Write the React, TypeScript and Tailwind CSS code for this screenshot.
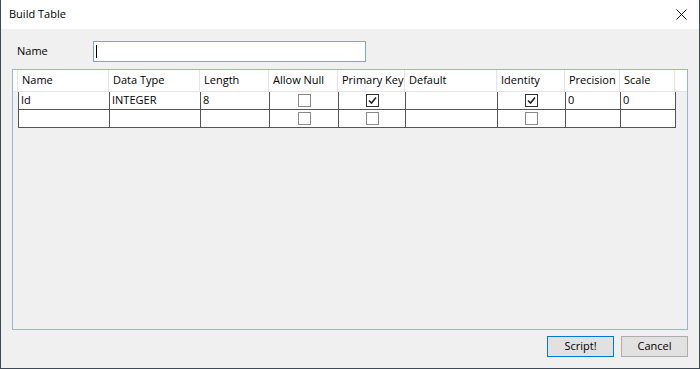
import React from "react";

const cols = [
  { name: "Name", w: "w-[91px]" },
  { name: "Data Type", w: "w-[91px]" },
  { name: "Length", w: "w-[69px]" },
  { name: "Allow Null", w: "w-[69px]" },
  { name: "Primary Key", w: "w-[67px]" },
  { name: "Default", w: "w-[92px]" },
  { name: "Identity", w: "w-[68px]" },
  { name: "Precision", w: "w-[55px]" },
  { name: "Scale", w: "w-[55px]" },
];

type Cell = { text?: string; check?: boolean; checked?: boolean };

const rows: Cell[][] = [
  [
    { text: "Id" },
    { text: "INTEGER" },
    { text: "8" },
    { check: true, checked: false },
    { check: true, checked: true },
    { text: "" },
    { check: true, checked: true },
    { text: "0" },
    { text: "0" },
  ],
  [
    { text: "" },
    { text: "" },
    { text: "" },
    { check: true, checked: false },
    { check: true, checked: false },
    { text: "" },
    { check: true, checked: false },
    { text: "" },
    { text: "" },
  ],
];

const CheckBox: React.FC<{ checked: boolean }> = ({ checked }) => (
  <div
    className={
      checked
        ? "w-[13px] h-[13px] border border-[#333333] bg-white flex items-center justify-center"
        : "w-[13px] h-[13px] border border-[#8a8a8a] bg-white"
    }
  >
    {checked && (
      <svg width="9" height="9" viewBox="0 0 9 9">
        <path d="M1 4.5 L3.5 7 L8 1.5" fill="none" stroke="#222" strokeWidth="1.6" />
      </svg>
    )}
  </div>
);

export default function App() {
  return (
    <div
      className="w-[700px] h-[369px] flex flex-col border-x border-b border-[#3f4a59] bg-[#f0f0f0] text-[11px] text-black overflow-hidden whitespace-nowrap"
      style={{ fontFamily: '"Open Sans", "Noto Sans", sans-serif' }}
    >
      {/* Title bar */}
      <div className="h-[29px] bg-white flex items-center justify-between pl-[8px] pr-[12px] shrink-0">
        <span className="text-[11px]">Build Table</span>
        <svg width="11" height="11" viewBox="0 0 11 11">
          <path d="M0.5 0.5 L10.5 10.5 M10.5 0.5 L0.5 10.5" stroke="#111" strokeWidth="1" />
        </svg>
      </div>

      {/* Body */}
      <div className="flex-1 flex flex-col px-[11px] pt-[12px] pb-[11px]">
        <div className="flex items-center h-[20px]">
          <span className="w-[81px] pl-[5px]">Name</span>
          <div className="w-[273px] h-[21px] border border-[#6fa8e6] bg-white flex items-center pl-[2px]">
            <div className="w-px h-[13px] bg-black" />
          </div>
        </div>

        {/* Grid */}
        <div className="mt-[8px] h-[261px] border border-[#9eb3cd] bg-[#f0f0f0] flex flex-col">
          <div className="flex h-[22px] bg-white border-b border-[#e5e5e5]">
            <div className="w-[5px] border-r border-[#e5e5e5]" />
            {cols.map((c) => (
              <div key={c.name} className={`${c.w} border-r border-[#e5e5e5] pl-[4px] flex items-center`}>
                {c.name}
              </div>
            ))}
            <div className="flex-1" />
          </div>
          {rows.map((r, i) => (
            <div key={i} className="flex h-[18px]">
              <div className="w-[5px]" />
              <div className="flex bg-white border-l-[1.5px] border-b-[1.5px] border-[#555555]">
                {r.map((cell, j) => (
                  <div
                    key={j}
                    className={`${cols[j].w} ${j === 0 ? "w-[89px]" : ""} border-r-[1.5px] border-[#555555] flex items-center ${
                      cell.check ? "justify-center" : "pl-[2px]"
                    }`}
                  >
                    {cell.check ? <CheckBox checked={!!cell.checked} /> : cell.text}
                  </div>
                ))}
              </div>
            </div>
          ))}
        </div>

        {/* Buttons */}
        <div className="mt-auto flex justify-end gap-[7px]">
          <button className="w-[67px] h-[21px] bg-[#e1e1e1] border border-[#0078d7] text-[11px]">Script!</button>
          <button className="w-[67px] h-[21px] bg-[#e1e1e1] border border-[#adadad] text-[11px]">Cancel</button>
        </div>
      </div>
    </div>
  );
}
